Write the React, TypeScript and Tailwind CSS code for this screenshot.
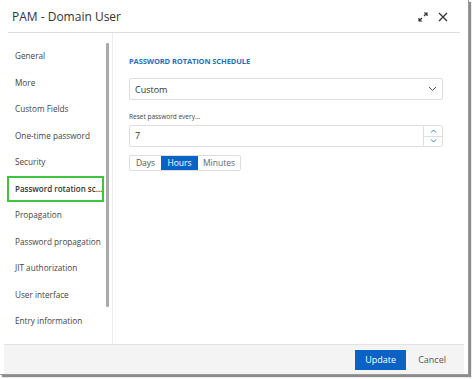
import React from "react";

const NAV = [
  "General",
  "More",
  "Custom Fields",
  "One-time password",
  "Security",
  "Password rotation sc...",
  "Propagation",
  "Password propagation",
  "JIT authorization",
  "User interface",
  "Entry information",
];

export default function App() {
  return (
    <div className="w-[474px] h-[379px] bg-white" style={{ fontFamily: '"Open Sans", "Noto Sans", sans-serif' }}>
      <div className="w-[469px] h-[375px] bg-white flex flex-col shadow-[2px_2px_1px_rgba(0,0,0,0.45)] border-r border-b border-[#9a9a9a]">
        {/* header */}
        <div className="h-[33px] mx-[8px] flex items-center justify-between border-b border-[#dcdcdc]">
          <span className="text-[12px] text-[#333] pl-[4px] pt-[2px]">PAM - Domain User</span>
          <div className="flex items-center gap-[10px] pr-[12px] pt-[2px]">
            <svg width="10" height="10" viewBox="0 0 10 10" fill="none" stroke="#333" strokeWidth="1.2">
              <path d="M6 1h3v3M9 1L6 4M4 9H1V6M1 9l3-3" />
            </svg>
            <svg width="10" height="10" viewBox="0 0 10 10" fill="none" stroke="#333" strokeWidth="1.3">
              <path d="M1 1l8 8M9 1L1 9" />
            </svg>
          </div>
        </div>

        <div className="flex flex-1 min-h-0">
          {/* sidebar */}
          <div className="w-[113px] shrink-0 flex border-r border-[#eeeeee]">
            <div className="flex-1 flex flex-col pt-[10px] pl-[7px]">
              {NAV.map((label, i) => {
                const active = i === 5;
                return (
                  <div
                    key={label}
                    className={
                      active
                        ? "h-[26.5px] w-[97px] flex items-center pl-[6px] border-2 border-[#3ec43e] text-[8px] font-semibold text-[#333] whitespace-nowrap"
                        : "h-[26.5px] flex items-center pl-[8px] text-[8.2px] text-[#444] whitespace-nowrap"
                    }
                  >
                    {label}
                  </div>
                );
              })}
            </div>
            <div className="w-[6px] pt-[10px] pr-[3px]">
              <div className="w-[3px] h-[264px] bg-[#a9a9a9] rounded-[1px]" />
            </div>
          </div>

          {/* content */}
          <div className="flex-1 pl-[16px] pr-[25px] pt-[23px]">
            <div className="text-[7.5px] font-bold text-[#1f6fc0] tracking-[-0.1px]">PASSWORD ROTATION SCHEDULE</div>
            <div className="mt-[11px] h-[22px] border border-[#dedede] rounded-[2px] flex items-center justify-between px-[5px]">
              <span className="text-[9px] text-[#333]">Custom</span>
              <svg width="9" height="6" viewBox="0 0 9 6" fill="none" stroke="#555" strokeWidth="1">
                <path d="M1 1l3.5 3.5L8 1" />
              </svg>
            </div>
            <div className="mt-[12px] text-[6.5px] text-[#444]">Reset password every...</div>
            <div className="mt-[3px] h-[22px] border border-[#dedede] rounded-[2px] flex">
              <div className="flex-1 flex items-center px-[5px] text-[9px] text-[#333]">7</div>
              <div className="w-[19px] flex flex-col border-l border-[#dedede]">
                <div className="flex-1 flex items-center justify-center border-b border-[#dedede]">
                  <svg width="7" height="4" viewBox="0 0 7 4" fill="none" stroke="#3a78c0" strokeWidth="1">
                    <path d="M1 3.5L3.5 1 6 3.5" />
                  </svg>
                </div>
                <div className="flex-1 flex items-center justify-center">
                  <svg width="7" height="4" viewBox="0 0 7 4" fill="none" stroke="#3a78c0" strokeWidth="1">
                    <path d="M1 0.5L3.5 3 6 0.5" />
                  </svg>
                </div>
              </div>
            </div>
            <div className="mt-[8px] flex">
              <div className="h-[16px] flex border border-[#dedede] rounded-[2px] text-[8.5px]">
                <div className="w-[31px] flex items-center justify-center text-[#555]">Days</div>
                <div className="w-[37px] flex items-center justify-center bg-[#0a63c4] text-white">Hours</div>
                <div className="w-[42px] flex items-center justify-center text-[#666]">Minutes</div>
              </div>
            </div>
          </div>
        </div>

        {/* footer */}
        <div className="h-[30px] shrink-0 mx-[4px] bg-[#f4f4f4] border-t border-[#e2e2e2] flex items-center justify-end gap-[12px] pr-[18px]">
          <div className="w-[51px] h-[20px] bg-[#0a63c4] text-white text-[9px] flex items-center justify-center">Update</div>
          <span className="text-[9px] text-[#555]">Cancel</span>
        </div>
      </div>
    </div>
  );
}
